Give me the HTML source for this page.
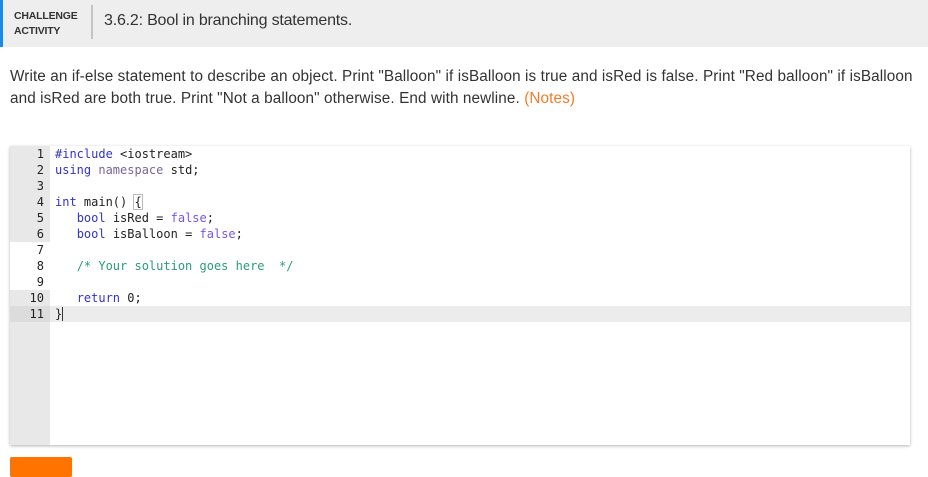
<!DOCTYPE html>
<html><head><style>
body{margin:0;width:928px;height:473px;overflow:hidden;background:#fff;font-family:"Liberation Sans",sans-serif;position:relative}
.hdr{position:absolute;left:0;top:0;width:928px;height:47px;background:#eeeeee;border-left:3px solid #1e88e5;box-sizing:border-box}
.lab{position:absolute;left:11px;top:9px;font-size:10.5px;font-weight:bold;color:#333;line-height:15px;letter-spacing:-0.2px}
.sep{position:absolute;left:88px;top:5px;width:2px;height:34px;background:#c4c4c4}
.ttl{position:absolute;left:101px;top:12px;font-size:16px;color:#333;letter-spacing:-0.2px}
.desc{position:absolute;left:10px;top:66px;font-size:15.3px;line-height:22px;color:#333;letter-spacing:0.1px;white-space:nowrap}
.desc span{color:#f47a28}
.ed{position:absolute;left:10px;top:146px;width:900px;height:299px;background:#fff;box-shadow:0 1px 3px rgba(0,0,0,.3)}
.gut{position:absolute;left:0;top:0;width:40px;height:299px;background:#e8e8e8}
.gw{position:absolute;left:0;top:96px;width:40px;height:48px;background:#fff}
.hl{position:absolute;left:40px;top:160px;width:860px;height:16px;background:#ececec}
.hg{position:absolute;left:0;top:160px;width:40px;height:16px;background:#dcdcdc}
.code{position:absolute;left:0;top:0;font-family:"DejaVu Sans Mono","Liberation Mono",monospace;font-size:12px;line-height:16px;white-space:pre}
.ln{position:absolute;left:0;width:34px;text-align:right;color:#222}
.tx{position:absolute;left:45px;color:#222}
.k{color:#3333cc}.v{color:#7a55e8}.n{color:#776699}.c{color:#2a9c7a}
.btn{position:absolute;left:10px;top:457px;width:62px;height:20px;background:#ff7300;border-radius:2px}
</style></head><body>
<div class="hdr"><div class="lab">CHALLENGE<br>ACTIVITY</div><div class="sep"></div><div class="ttl">3.6.2: Bool in branching statements.</div></div>
<div class="desc">Write an if-else statement to describe an object. Print "Balloon" if isBalloon is true and isRed is false. Print "Red balloon" if isBalloon<br>and isRed are both true. Print "Not a balloon" otherwise. End with newline. <span>(Notes)</span></div>
<div class="ed">
<div class="gut"></div><div class="gw"></div><div class="hl"></div><div class="hg"></div>
<div class="code">
<div class="ln" style="top:0">1</div><div class="tx" style="top:0"><span class="k">#include</span> &lt;iostream&gt;</div>
<div class="ln" style="top:16px">2</div><div class="tx" style="top:16px"><span class="k">using</span> <span class="n">namespace</span> std;</div>
<div class="ln" style="top:32px">3</div>
<div class="ln" style="top:48px">4</div><div class="tx" style="top:48px"><span class="k">int</span> main() <span style="outline:1px solid #bbb">{</span></div>
<div class="ln" style="top:64px">5</div><div class="tx" style="top:64px">   <span class="k">bool</span> isRed = <span class="v">false</span>;</div>
<div class="ln" style="top:80px">6</div><div class="tx" style="top:80px">   <span class="k">bool</span> isBalloon = <span class="v">false</span>;</div>
<div class="ln" style="top:96px">7</div>
<div class="ln" style="top:112px">8</div><div class="tx" style="top:112px">   <span class="c">/* Your solution goes here  */</span></div>
<div class="ln" style="top:128px">9</div>
<div class="ln" style="top:144px">10</div><div class="tx" style="top:144px">   <span class="k">return</span> 0;</div>
<div class="ln" style="top:160px">11</div><div class="tx" style="top:160px">}<span style="border-left:1px solid #333"></span></div>
</div></div>
<div class="btn"></div>
</body></html>
